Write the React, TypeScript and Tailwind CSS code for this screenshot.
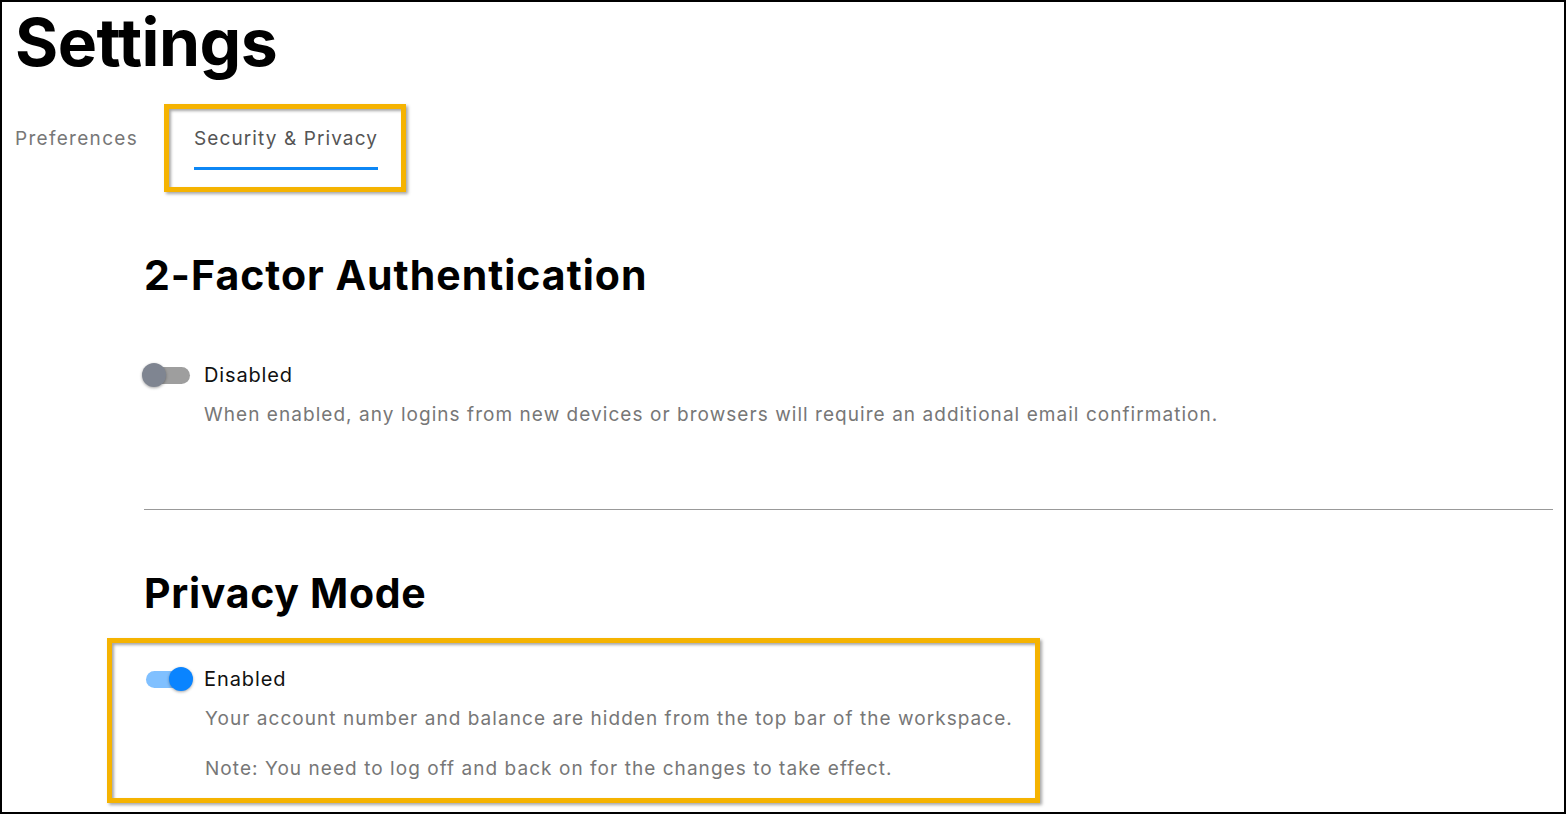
import React from "react";

function Toggle({ on }: { on: boolean }) {
    return (
        <div className="relative w-[44px] h-[17px] shrink-0">
            <div className={on ? "h-full w-full rounded-full bg-[#80c0ff]" : "h-full w-full rounded-full bg-[#9e9e9e]"} />
            <div
                className={
                    on
                        ? "absolute top-1/2 -translate-y-1/2 right-[-3px] w-6 h-6 rounded-full bg-[#0a84ff] shadow-[0_1px_3px_rgba(0,0,0,0.35)]"
                        : "absolute top-1/2 -translate-y-1/2 left-[-4px] w-6 h-6 rounded-full bg-[#7f8591] shadow-[0_1px_3px_rgba(0,0,0,0.35)]"
                }
            />
        </div>
    );
}

const frame =
    "border-[5px] border-[#f5b301] shadow-[2px_2px_3px_rgba(0,0,0,0.35),inset_2px_2px_3px_rgba(0,0,0,0.35)]";

const desc = "text-[19px] leading-[28px] tracking-[1.05px] text-[#777]";

export default function App() {
    return (
        <div className="w-[1566px] h-[814px] border-2 border-black bg-white overflow-hidden font-['Inter',sans-serif] text-black">
            <div className="pl-[13px]">
                <h1 className="mt-[7px] text-[66px] leading-none font-bold tracking-[-0.5px]">Settings</h1>

                <div className="flex items-start mt-[29px]">
                    <div className="w-[149px] pt-[21px] text-[19px] leading-[28px] tracking-[1.3px] text-[#777]">Preferences</div>
                    <div className={`${frame} pt-[16px] pb-[17px] pl-[25px] pr-[23px]`}>
                        <div className="text-[19px] leading-[28px] tracking-[1.1px] text-[#555]">Security &amp; Privacy</div>
                        <div className="mt-[14px] h-[3px] bg-[#0d87f5]" />
                    </div>
                </div>
            </div>

            <div className="ml-[142px] mr-[11px]">
                <h2 className="mt-[63px] text-[41px] leading-none font-bold tracking-[1px]">2-Factor Authentication</h2>

                <div className="mt-[65px] pl-[2px] flex items-center">
                    <Toggle on={false} />
                    <span className="ml-[14px] text-[20px] leading-[28px] tracking-[0.85px] text-[#111]">Disabled</span>
                </div>
                <p className={`mt-[12px] pl-[60px] ${desc}`}>
                    When enabled, any logins from new devices or browsers will require an additional email confirmation.
                </p>

                <div className="mt-[80px] h-px bg-[#999]" />

                <h2 className="mt-[63px] text-[41px] leading-none font-bold tracking-[0.7px]">Privacy Mode</h2>

                <div className={`${frame} mt-[24px] -ml-[37px] w-fit pl-[34px] pr-[22px] pt-[22px] pb-[15px]`}>
                    <div className="flex items-center">
                        <Toggle on={true} />
                        <span className="ml-[14px] text-[20px] leading-[28px] tracking-[0.9px] text-[#111]">Enabled</span>
                    </div>
                    <p className={`mt-[12px] pl-[59px] ${desc}`}>
                        Your account number and balance are hidden from the top bar of the workspace.
                    </p>
                    <p className={`mt-[22px] pl-[59px] ${desc}`}>
                        Note: You need to log off and back on for the changes to take effect.
                    </p>
                </div>
            </div>
        </div>
    );
}
